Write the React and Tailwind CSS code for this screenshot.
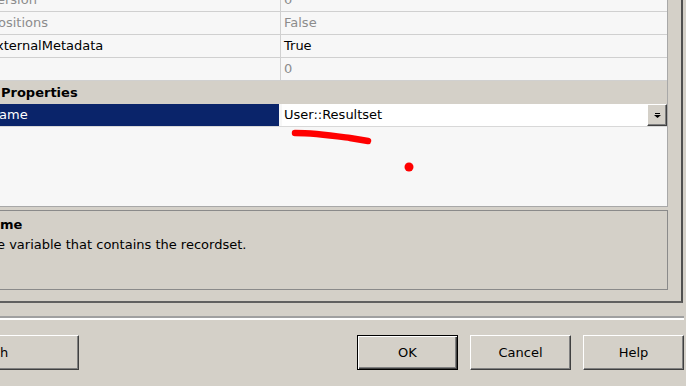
import React from "react";

const rows = [
  { name: "ersion", value: "0", dim: true, shift: "-ml-[3px]" },
  { name: "ositions", value: "False", dim: true, shift: "-ml-[2px]" },
  { name: "xternalMetadata", value: "True", dim: false, shift: "-ml-[4px]" },
  { name: "", value: "0", dim: true, shift: "" },
];

function Btn({ children, primary, className = "" }) {
  const frame = primary
    ? "border border-black shadow-[inset_1px_1px_0_#ffffff,inset_-1px_-1px_0_#404040,inset_-2px_-2px_0_#808080]"
    : "border border-t-white border-l-white border-r-[#404040] border-b-[#404040] shadow-[inset_-1px_-1px_0_#808080]";
  return (
    <button
      type="button"
      className={`h-[35px] w-[101px] shrink-0 bg-[#d4d0c8] text-[13px] text-black ${frame} ${className}`}
    >
      {children}
    </button>
  );
}

export default function App() {
  return (
    <div className="relative w-[686px] h-[386px] overflow-hidden bg-[#d4d0c8] font-['DejaVu_Sans',sans-serif] text-[13px] text-black">
      {/* tab page frame */}
      <div className="flex h-[303px] w-[683px] flex-col border-r-2 border-b-2 border-r-[#505050] border-b-[#606060]">
        {/* property grid */}
        <div className="h-[207px] w-[668px] overflow-hidden border-r border-b border-[#a8a8a8] bg-[#f7f7f7]">
          <div className="-mt-[11px]">
            {rows.map((r, i) => (
              <div key={i} className="flex h-[23px] border-b border-[#d0d0d0]">
                <div className={`flex w-[281px] items-center overflow-hidden border-r border-[#d0d0d0] whitespace-nowrap ${r.dim ? "text-[#8c8c8c]" : "text-black"}`}>
                  <span className={r.shift}>{r.name}</span>
                </div>
                <div className={`flex flex-1 items-center pl-[3px] ${r.dim ? "text-[#8c8c8c]" : "text-black"}`}>
                  {r.value}
                </div>
              </div>
            ))}
            <div className="flex h-[23px] items-center bg-[#d4d0c8] pl-[1px] font-bold">Properties</div>
            <div className="flex h-[23px] border-b border-[#d8d8d8]">
              <div className="flex w-[279px] items-center bg-[#0a246a] text-white">
                <span className="-ml-[1px]">ame</span>
              </div>
              <div className="ml-[3px] flex flex-1 items-center bg-white pl-[2px]">User::Resultset</div>
              <div className="flex h-[22px] w-[20px] items-center justify-center border border-t-white border-l-white border-r-[#404040] border-b-[#404040] bg-[#d4d0c8] shadow-[inset_-1px_-1px_0_#808080]">
                <svg width="7" height="5" viewBox="0 0 7 5">
                  <rect x="1" y="0" width="5" height="1" fill="#000" />
                  <path d="M0 2h7L3.5 5z" fill="#000" />
                </svg>
              </div>
            </div>
          </div>
        </div>

        {/* description panel */}
        <div className="mt-[3px] h-[80px] w-[668px] border-r border-t border-b border-[#8a8a8a] pt-[4px]">
          <div className="font-bold leading-[20px]">me</div>
          <div className="-ml-[3px] leading-[20px]">e variable that contains the recordset.</div>
        </div>
      </div>

      {/* etched separator */}
      <div className="mt-[13px] h-[2px] w-[684px] bg-[#a0a0a0]" />
      <div className="h-[2px] w-[684px] bg-white" />

      {/* buttons */}
      <div className="mt-[15px] flex w-[684px] items-center">
        <Btn className="-ml-[22px] text-left pl-[21px]">h</Btn>
        <div className="ml-auto flex gap-3">
          <Btn primary>OK</Btn>
          <Btn>Cancel</Btn>
          <Btn className="w-[100px]">Help</Btn>
        </div>
      </div>

      {/* red annotations */}
      <svg className="pointer-events-none absolute left-0 top-0" width="686" height="386">
        <path d="M295 133 C 315 133 335 136 350 138 L 368 141" stroke="#f00" strokeWidth="6.5" strokeLinecap="round" fill="none" />
        <circle cx="409" cy="167" r="4.5" fill="#f00" />
      </svg>
    </div>
  );
}
